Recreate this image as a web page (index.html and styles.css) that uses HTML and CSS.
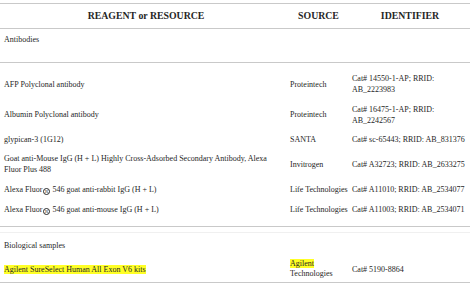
FILE: index.html
```html
<!DOCTYPE html>
<html>
<head>
<meta charset="utf-8">
<link rel="stylesheet" href="styles.css">
</head>
<body>
<table class="kr">
  <colgroup>
    <col class="c1"><col class="c2"><col class="c3">
  </colgroup>
  <thead>
    <tr class="head">
      <th class="h1">REAGENT or RESOURCE</th>
      <th>SOURCE</th>
      <th>IDENTIFIER</th>
    </tr>
  </thead>
  <tbody class="sec">
    <tr class="label first"><td colspan="3">Antibodies</td></tr>
    <tr class="gap-a"><td colspan="3"></td></tr>
    <tr class="pad-top"><td colspan="3"></td></tr>
    <tr><td>AFP Polyclonal antibody</td><td>Proteintech</td><td>Cat# 14550-1-AP; RRID: AB_2223983</td></tr>
    <tr><td>Albumin Polyclonal antibody</td><td>Proteintech</td><td>Cat# 16475-1-AP; RRID: AB_2242567</td></tr>
    <tr><td>glypican-3 (1G12)</td><td>SANTA</td><td>Cat# sc-65443; RRID: AB_831376</td></tr>
    <tr><td>Goat anti-Mouse IgG (H + L) Highly Cross-Adsorbed Secondary Antibody, Alexa Fluor Plus 488</td><td>Invitrogen</td><td>Cat# A32723; RRID: AB_2633275</td></tr>
    <tr><td>Alexa Fluor<span class="reg">R</span> 546 goat anti-rabbit IgG (H + L)</td><td>Life Technologies</td><td>Cat# A11010; RRID: AB_2534077</td></tr>
    <tr><td>Alexa Fluor<span class="reg">R</span> 546 goat anti-mouse IgG (H + L)</td><td>Life Technologies</td><td>Cat# A11003; RRID: AB_2534071</td></tr>
    <tr class="gap-b"><td colspan="3"></td></tr>
  </tbody>
  <tbody class="sec">
    <tr class="faint"><td colspan="3"></td></tr>
    <tr class="label second"><td colspan="3">Biological samples</td></tr>
    <tr class="last"><td><span class="hl">Agilent SureSelect Human All Exon V6 kits</span></td><td class="src2"><span class="hl">Agilent</span> Technologies</td><td>Cat# 5190-8864</td></tr>
  </tbody>
</table>
</body>
</html>
```
FILE: styles.css
```css
html, body {
  margin: 0;
  padding: 0;
  background: #ffffff;
}
body {
  padding-top: 3px;
  font-family: "Liberation Serif", "Times New Roman", serif;
  font-size: 8px;
  color: #262626;
}
.kr {
  width: 470px;
  table-layout: fixed;
  border-collapse: collapse;
  border-top: 1.5px solid #c9c9c9;
  border-bottom: 1.5px solid #c9c9c9;
}
.c1 { width: 287px; }
.c2 { width: 63px; }
.c3 { width: 120px; }
th {
  font-weight: bold;
  font-size: 9.8px;
  text-align: center;
  height: 25px;
  padding: 0;
  vertical-align: middle;
  padding-bottom: 2px;
  box-sizing: border-box;
}
.h1 { padding-left: 5px; }
.head { border-bottom: 1.5px solid #c9c9c9; }
td {
  padding: 4.2px 0 4.2px 4px;
  line-height: 11px;
  vertical-align: middle;
}
td:first-child { padding-right: 12px; }
td:nth-child(2) { padding-left: 3px; }
td:nth-child(3) { padding-left: 2px; }
.label td { padding-top: 5px; padding-bottom: 4px; }
.gap-a td { padding: 0; height: 13px; border-bottom: 1.5px solid #c9c9c9; }
.pad-top td { padding: 0; height: 6px; }
.gap-b td { padding: 0; height: 7px; }
.sec + .sec { border-top: 1.5px solid #c9c9c9; }
.faint td { padding: 0; height: 5px; border-bottom: 1px solid #f0f0f0; }
.label.second td { padding-top: 7px; padding-bottom: 4px; }
.last td { padding-top: 4px; padding-bottom: 3px; }
.src2 { line-height: 10px; }
.hl { background: #ffff26; }
.reg {
  display: inline-block;
  width: 7.5px;
  height: 7.5px;
  border: 0.7px solid #262626;
  border-radius: 50%;
  font-size: 5px;
  line-height: 6px;
  text-align: center;
  vertical-align: -1px;
  box-sizing: border-box;
  margin-left: 0.5px;
}
```
